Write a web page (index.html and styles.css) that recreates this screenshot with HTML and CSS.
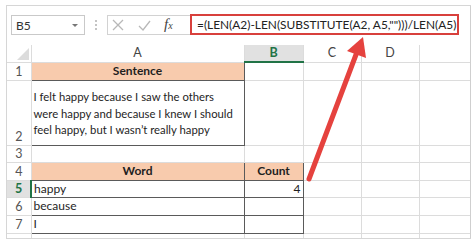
FILE: index.html
```html
<html>
  <head>
    <link rel="stylesheet" href="styles.css">
  </head>

  <body>
    <main class="frame">
      <div class="toolbar">
        <div class="name-box">
          <span>B5</span>
          <span class="caret"></span>
        </div>
        <div class="dots"><i></i><i></i><i></i></div>
        <div class="buttons">
          <svg class="btn-x" width="12" height="12" viewBox="0 0 12 12">
            <path d="M1 1 L11 11 M11 1 L1 11" stroke="#b8b8b8" stroke-width="1.3" fill="none" />
          </svg>
          <svg class="btn-check" width="13" height="11" viewBox="0 0 13 11">
            <path d="M1 6 L5 10 L12 1" stroke="#b8b8b8" stroke-width="1.3" fill="none" />
          </svg>
          <span class="fx">f<sub>x</sub></span>
        </div>
        <div class="formula">=(LEN(A2)-LEN(SUBSTITUTE(A2, A5,"")))/LEN(A5)</div>
      </div>

      <table class="sheet">
        <colgroup>
          <col class="c-num" />
          <col class="c-a" />
          <col class="c-b" />
          <col class="c-c" />
          <col class="c-d" />
          <col class="c-e" />
        </colgroup>
        <tr class="col-heads">
          <th class="corner"><span class="tri"></span></th>
          <th>A</th>
          <th class="active-col">B</th>
          <th>C</th>
          <th>D</th>
          <th></th>
        </tr>
        <tr class="r18">
          <td class="num">1</td>
          <td class="box head">Sentence</td>
          <td></td><td></td><td></td><td></td>
        </tr>
        <tr class="r65">
          <td class="num">2</td>
          <td class="box para">I felt happy because I saw the others were happy and because I knew I should feel happy, but I wasn’t really happy</td>
          <td></td><td></td><td></td><td></td>
        </tr>
        <tr class="r17">
          <td class="num">3</td>
          <td></td><td></td><td></td><td></td><td></td>
        </tr>
        <tr class="r18">
          <td class="num">4</td>
          <td class="box head">Word</td>
          <td class="box head">Count</td>
          <td></td><td></td><td></td>
        </tr>
        <tr class="r17">
          <td class="num active-row">5</td>
          <td class="box">happy</td>
          <td class="box value selected">4</td>
          <td></td><td></td><td></td>
        </tr>
        <tr class="r18">
          <td class="num">6</td>
          <td class="box">because</td>
          <td class="box"></td>
          <td></td><td></td><td></td>
        </tr>
        <tr class="r18">
          <td class="num">7</td>
          <td class="box">I</td>
          <td class="box"></td>
          <td></td><td></td><td></td>
        </tr>
        <tr class="r18">
          <td class="num"></td>
          <td></td><td></td><td></td><td></td><td></td>
        </tr>
      </table>
    </main>

    <!-- annotation arrow from the count cell to the formula -->
    <svg class="arrow" width="474" height="244" viewBox="0 0 474 244">
      <line x1="309" y1="179" x2="357" y2="52" stroke="#e5423e" stroke-width="5" stroke-linecap="round" />
      <polygon points="363,37 347,51 366,58" fill="#e5423e" />
    </svg>
  </body>
</html>
```

FILE: styles.css
```css
:root {
  --grid: #dcdcdc;
  --dark: #5a5a5a;
  --orange: #f8cbad;
  --green: #217346;
  --red: #d8403c;
  --text: #1e1e1e;
}

* {
  box-sizing: border-box;
}

html {
  font-family: 'Lato', 'Open Sans', 'Liberation Sans', sans-serif;
  color: var(--text);
}

body {
  margin: 0;
  background: #ffffff;
  position: relative;
  width: 474px;
  height: 244px;
  overflow: hidden;
}

.frame {
  margin: 5px 0 0 6px;
  width: 465px;
  height: 234px;
  border: 1px solid #d6d6d6;
  border-right-color: #cfcfcf;
  overflow: hidden;
  display: flex;
  flex-direction: column;
}

.toolbar {
  height: 39px;
  flex: none;
  display: flex;
  align-items: flex-start;
  padding: 9px 0 0 4px;
}

.name-box {
  width: 74px;
  height: 20px;
  border: 1px solid #c9c9c9;
  display: flex;
  align-items: center;
  justify-content: space-between;
  padding: 0 6px 0 4px;
  font-size: 12px;
  color: #333;
}

.caret {
  width: 0;
  height: 0;
  border-left: 3px solid transparent;
  border-right: 3px solid transparent;
  border-top: 3px solid #777;
}

.dots {
  width: 22px;
  height: 20px;
  display: flex;
  flex-direction: column;
  align-items: center;
  justify-content: center;
  gap: 2px;
}

.dots i {
  width: 2px;
  height: 2px;
  background: #c4c4c4;
}

.buttons {
  width: 83px;
  height: 20px;
  border: 1px solid #d2d2d2;
  border-right: none;
  display: flex;
  align-items: center;
  padding-left: 4px;
}

.btn-check {
  margin-left: 14px;
}

.fx {
  margin-left: 13px;
  font-family: 'Liberation Serif', serif;
  font-style: italic;
  font-size: 15px;
  line-height: 16px;
  color: #444;
}

.fx sub {
  font-size: 10px;
  vertical-align: 0;
}

.formula {
  width: 269px;
  height: 21px;
  margin-top: -1px;
  border: 2px solid var(--red);
  font-size: 11.9px;
  line-height: 17px;
  padding-left: 5px;
  white-space: nowrap;
  overflow: hidden;
  color: #222;
}

.sheet {
  border-collapse: collapse;
  table-layout: fixed;
  width: 463px;
  font-size: 12px;
}

.c-num { width: 24px; }
.c-a { width: 213px; }
.c-b { width: 59px; }
.c-c { width: 58px; }
.c-d { width: 58px; }
.c-e { width: 51px; }

.sheet th,
.sheet td {
  border: 1px solid var(--grid);
  padding: 0 2px;
  overflow: hidden;
  white-space: nowrap;
}

.sheet tr:first-child th {
  border-top: none;
}

.sheet th:first-child,
.sheet td:first-child {
  border-left: none;
}

.col-heads {
  height: 17px;
}

.col-heads th {
  font-weight: 400;
  color: #444;
  font-size: 12.5px;
  line-height: 14px;
  background: #fff;
}

.col-heads th.active-col {
  background: #e1e1e1;
  color: var(--green);
  font-weight: 700;
  border-bottom: 2px solid var(--green);
}

.corner {
  position: relative;
}

.tri {
  position: absolute;
  right: 2px;
  bottom: 2px;
  width: 0;
  height: 0;
  border-left: 12px solid transparent;
  border-bottom: 12px solid #dcdcdc;
}

.r17 { height: 17px; }
.r18 { height: 18px; }
.r65 { height: 65px; }

.num {
  text-align: center;
  color: #555;
  font-size: 12.5px;
  vertical-align: bottom;
  line-height: 16px;
}

.num.active-row {
  background: #e1e1e1;
  color: var(--green);
  font-weight: 700;
  border-right: 2px solid var(--green);
}

.sheet td.box {
  border: 1px solid var(--dark);
  line-height: 16px;
}

.sheet td.head {
  background: var(--orange);
  font-weight: 700;
  text-align: center;
}

.sheet td.para {
  white-space: normal;
  vertical-align: bottom;
  font-size: 11.3px;
  line-height: 16.5px;
  padding: 0 4px 6px 2px;
}

.value {
  text-align: right;
}

.selected {
  position: relative;
}

.selected::after {
  content: '';
  position: absolute;
  left: -2px;
  top: -2px;
  right: -3px;
  bottom: -2px;
  border: 2px solid var(--red);
}

.arrow {
  position: absolute;
  left: 0;
  top: 0;
  pointer-events: none;
}
```
